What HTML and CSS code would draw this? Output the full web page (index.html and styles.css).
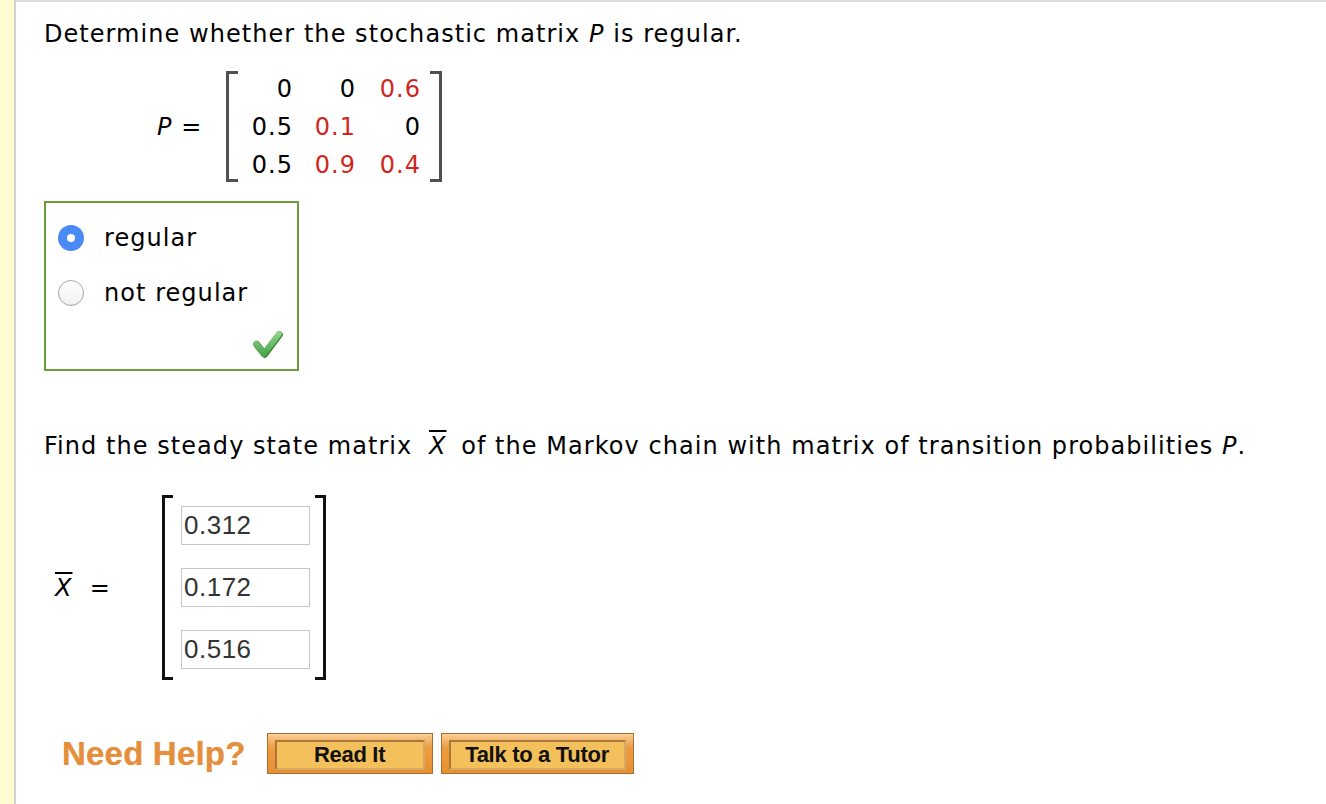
FILE: index.html
```html
<!DOCTYPE html>
<html lang="en">
<head>
    <meta charset="UTF-8" />
    <title>Stochastic matrix</title>
    <link rel="stylesheet" href="styles.css">
</head>
<body>
    <div class="page">
        <div class="gutter"></div>

        <main class="content">
            <p class="prompt">Determine whether the stochastic matrix <i>P</i> is regular.</p>

            <div class="eq eq-p">
                <span class="eq-label"><i>P</i> =</span>
                <div class="matrix">
                    <span class="brk brk-l"></span>
                    <div class="cells">
                        <span>0</span><span>0</span><span class="red">0.6</span>
                        <span>0.5</span><span class="red">0.1</span><span>0</span>
                        <span>0.5</span><span class="red">0.9</span><span class="red">0.4</span>
                    </div>
                    <span class="brk brk-r"></span>
                </div>
            </div>

            <div class="choices">
                <label class="choice"><span class="radio on"></span>regular</label>
                <label class="choice"><span class="radio"></span>not regular</label>
                <svg class="check" width="32" height="30" viewBox="0 0 32 30">
                    <defs>
                        <linearGradient id="chk" x1="0" y1="0" x2="0" y2="1">
                            <stop offset="0" stop-color="#8fd08a"/>
                            <stop offset="1" stop-color="#4fa84f"/>
                        </linearGradient>
                    </defs>
                    <path d="M5 15 L13 25 L28 5" fill="none" stroke="#3d8a3d" stroke-width="7" stroke-linejoin="round" stroke-linecap="round" transform="translate(0.6 0.8)"/>
                    <path d="M5 15 L13 25 L28 5" fill="none" stroke="url(#chk)" stroke-width="6" stroke-linejoin="round" stroke-linecap="round"/>
                </svg>
            </div>

            <p class="prompt second">Find the steady state matrix <span class="xbar">X</span> of the Markov chain with matrix of transition probabilities <i>P</i>.</p>

            <div class="eq eq-x">
                <span class="eq-label"><span class="xbar">X</span> &nbsp;=</span>
                <div class="vec">
                    <span class="vbrk vbrk-l"></span>
                    <div class="inputs">
                        <input class="ans" type="text" value="0.312" readonly>
                        <input class="ans" type="text" value="0.172" readonly>
                        <input class="ans" type="text" value="0.516" readonly>
                    </div>
                    <span class="vbrk vbrk-r"></span>
                </div>
            </div>

            <div class="help">
                <span class="help-title">Need Help?</span>
                <button class="btn btn-read"><span>Read It</span></button>
                <button class="btn btn-tutor"><span>Talk to a Tutor</span></button>
            </div>
        </main>
    </div>
</body>
</html>
```

FILE: styles.css
```css
body {
    margin: 0;
    padding: 0;
    font-family: 'DejaVu Sans', Verdana, sans-serif;
    font-size: 24px;
    color: #000;
    background-color: #fff;
}

.page {
    display: flex;
    min-height: 100vh;
}

.gutter {
    width: 14px;
    flex: none;
    background-color: #fffcd3;
    border-right: 2px solid #d2d2d2;
}

.content {
    flex: 1;
    border-top: 2px solid #dcdcdc;
    padding: 18px 0 0 28px;
    letter-spacing: 1.05px; /* dejavu runs narrower than verdana */
}

p {
    margin: 0;
}

.prompt {
    line-height: 28px;
}

.prompt.second {
    margin-top: 61px;
}

.red {
    color: #d0271d;
}

.xbar {
    font-style: italic;
    text-decoration: overline;
    text-decoration-thickness: 2px;
    margin: 0 6px 0 8px;
}

/* equations */
.eq {
    display: flex;
    align-items: center;
}

.eq-p {
    margin-top: 23px;
}

.eq-p .eq-label {
    margin-left: 113px;
    width: 69px;
}

.matrix {
    display: flex;
}

.brk {
    width: 9px;
    border: 3px solid #505050;
}

.brk-l {
    border-right: none;
}

.brk-r {
    border-left: none;
    margin-left: 9px;
}

.cells {
    display: grid;
    grid-template-columns: 55px 63px 65px;
    grid-auto-rows: 38px;
    line-height: 38px;
    margin-top: -1px;
    margin-bottom: -2px;
    text-align: right;
}

/* radio box */
.choices {
    margin-top: 19px;
    width: 255px;
    height: 170px;
    box-sizing: border-box;
    border: 2px solid #6c9b3d;
    padding: 15px 14px 11px 12px;
    display: flex;
    flex-direction: column;
    gap: 16px;
}

.choice {
    display: flex;
    align-items: center;
    height: 40px;
    gap: 20px;
}

.radio {
    width: 26px;
    height: 26px;
    box-sizing: border-box;
    border-radius: 50%;
    border: 1px solid #a9a9a9;
    background: linear-gradient(#fff, #f1f1f1);
    box-shadow: inset 0 -1px 1px rgba(0, 0, 0, 0.06);
    display: flex;
    align-items: center;
    justify-content: center;
}

.radio.on {
    border: none;
    background: #4a8af4;
    box-shadow: none;
}

.radio.on::after {
    content: "";
    width: 8px;
    height: 8px;
    border-radius: 50%;
    background: #fff;
}

.check {
    margin-top: auto;
    align-self: flex-end;
    display: block;
}

/* steady state vector */
.eq-x {
    margin-top: 35px;
}

.eq-x .eq-label {
    margin-left: 11px;
    width: 107px;
}

.eq-x .xbar {
    margin: 0;
}

.vec {
    display: flex;
}

.vbrk {
    width: 8px;
    border: 3px solid #111;
}

.vbrk-l {
    border-right: none;
}

.vbrk-r {
    border-left: none;
}

.inputs {
    display: flex;
    flex-direction: column;
    gap: 23px;
    padding: 11px 5px 11px 8px;
}

.ans {
    width: 129px;
    height: 39px;
    box-sizing: border-box;
    margin: 0;
    border: 1px solid #c6c6c6;
    padding: 0 2px;
    font-family: 'Liberation Sans', Arial, sans-serif;
    font-size: 26px;
    letter-spacing: 0.5px;
    color: #333;
    background: #fff;
    outline: none;
}

/* help row */
.help {
    margin-top: 53px;
    display: flex;
    align-items: center;
    letter-spacing: normal;
}

.help-title {
    margin-left: 18px;
    margin-right: 21px;
    font-family: 'Liberation Sans', Arial, sans-serif;
    font-weight: bold;
    font-size: 33px;
    letter-spacing: 0.2px;
    color: #e58f3c;
    text-shadow: 0 0 1px rgba(229, 143, 60, 0.6);
}

.btn {
    height: 41px;
    box-sizing: border-box;
    margin: 0 8px 0 0;
    padding: 6px 7px 3px 7px;
    border: 1px solid #a46f37;
    background: linear-gradient(#f9cf96, #ee9b40 35%, #e8902f);
    display: flex;
    cursor: pointer;
}

.btn span {
    flex: 1;
    border: 2px solid #b3843f;
    border-color: #a87739 #d6a865 #d6a865 #a87739;
    background: #f3c05b;
    font-family: 'Liberation Sans', Arial, sans-serif;
    font-weight: bold;
    font-size: 22px;
    letter-spacing: -0.3px;
    line-height: 26px;
    color: #111;
    text-align: center;
}

.btn-read {
    width: 166px;
}

.btn-tutor {
    width: 193px;
}
```
